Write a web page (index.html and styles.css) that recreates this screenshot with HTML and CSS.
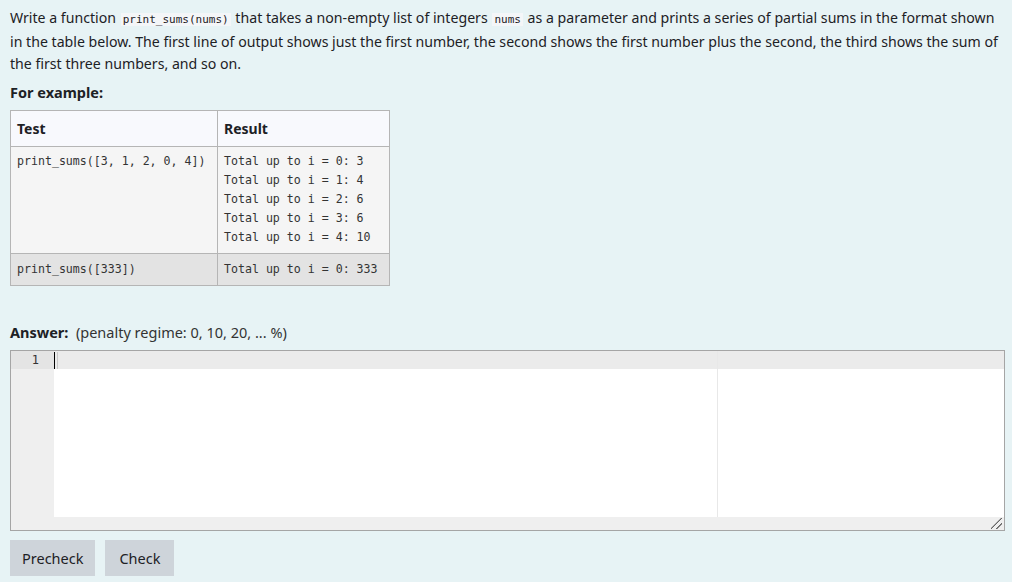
FILE: index.html
```html
<!DOCTYPE html>
<html>
<head>
<meta charset="utf-8">
<link rel="stylesheet" href="styles.css">
</head>
<body>
<div class="page">
  <p class="prompt">Write a function <code class="inl">print_sums(nums)</code> that takes a non-empty list of integers <code class="inl">nums</code> as a parameter and prints a series of partial sums in the format shown in the table below. The first line of output shows just the first number, the second shows the first number plus the second, the third shows the sum of the first three numbers, and so on.</p>
  <h4 class="example-title">For example:</h4>
  <table class="examples">
    <thead>
      <tr><th class="col-test">Test</th><th class="col-result">Result</th></tr>
    </thead>
    <tbody>
      <tr class="row-odd">
        <td><pre>print_sums([3, 1, 2, 0, 4])</pre></td>
        <td><pre>Total up to i = 0: 3
Total up to i = 1: 4
Total up to i = 2: 6
Total up to i = 3: 6
Total up to i = 4: 10</pre></td>
      </tr>
      <tr class="row-even">
        <td><pre>print_sums([333])</pre></td>
        <td><pre>Total up to i = 0: 333</pre></td>
      </tr>
    </tbody>
  </table>
  <div class="answer-label"><b>Answer:</b>&nbsp; <span>(penalty regime: 0, 10, 20, ... %)</span></div>
  <div class="editor">
    <div class="editor-main">
      <div class="gutter"><div class="gutter-line active">1</div></div>
      <div class="content">
        <div class="active-line"><span class="cursor"></span><span class="cursor-shadow"></span></div>
        <div class="print-margin"></div>
      </div>
    </div>
    <div class="editor-bottom"><span class="resize"></span></div>
  </div>
  <div class="buttons">
    <button class="btn">Precheck</button>
    <button class="btn btn-check">Check</button>
  </div>
</div>
</body>
</html>
```
FILE: styles.css
```css
* { box-sizing: border-box; }
html, body { margin: 0; padding: 0; }
body {
  background: #e7f3f5;
  font-family: "Noto Sans", "Open Sans", sans-serif;
  font-size: 14.15px;
  color: #1d2125;
}
.page { padding: 7px 10px 0 10px; }
.prompt { margin: 0; line-height: 22px; width: 990px; }
.inl {
  font-family: "DejaVu Sans Mono", monospace;
  font-size: 11px;
  background: #f4f6f8;
  padding: 0 2px;
  margin: 0 1px;
  color: #1d2125;
}
.example-title { margin: 6px 0 7px 0; font-size: 14.5px; font-weight: 700; line-height: 22px; }
.examples { border-collapse: collapse; font-size: 14px; }
.examples th, .examples td { border: 1px solid #b5b5b5; text-align: left; vertical-align: top; }
.examples th { background: #f8f9fd; padding: 8px 6px 7px 6px; font-weight: 700; line-height: 20px; }
.col-test { width: 207px; }
.col-result { width: 172px; }
.examples td { padding: 5px 5px 6px 6px; }
.examples pre {
  margin: 0;
  font-family: "DejaVu Sans Mono", monospace;
  font-size: 11.6px;
  line-height: 19px;
  color: #333;
}
.row-odd td { background: #f5f5f5; }
.row-even td { background: #e3e3e3; padding-top: 6px; padding-bottom: 6px; }
.answer-label { margin-top: 36px; line-height: 20px; font-size: 14.5px; }
.answer-label span { color: #333; }
.editor {
  margin-top: 8px;
  width: 995px;
  border: 1px solid #a5a5a5;
  background: #efefef;
}
.editor-main { display: flex; height: 166px; }
.gutter { width: 43px; background: #efefef; }
.gutter-line { height: 18px; line-height: 18px; text-align: right; padding-right: 15px; font-family: "DejaVu Sans Mono", monospace; font-size: 12px; color: #333; }
.gutter-line.active { background: #e4e4e4; }
.content { flex: 1; background: #fff; position: relative; }
.active-line { height: 18px; background: #ebebeb; display: flex; align-items: flex-start; }
.cursor { width: 1px; height: 17px; background: #000; margin-top: 1px; }
.cursor-shadow { width: 1px; height: 17px; background: #c8c8c8; margin-top: 1px; margin-left: 2px; }
.print-margin { position: absolute; top: 0; bottom: 0; left: 663px; width: 1px; background: #e8e8e8; }
.editor-bottom { height: 13px; position: relative; }
.resize {
  position: absolute; right: 2px; bottom: 1px; width: 11px; height: 11px;
  background: linear-gradient(135deg, transparent 45%, #666 46%, #666 52%, transparent 53%, transparent 70%, #666 71%, #666 77%, transparent 78%);
}
.buttons { display: flex; gap: 10px; margin-top: 9px; }
.btn {
  font-family: "Noto Sans", "Open Sans", sans-serif;
  font-size: 14.5px;
  color: #1d2125;
  background: #ced4da;
  border: none;
  height: 36px;
  padding: 0 12px;
}
.btn-check { padding: 0 14px; }
```
